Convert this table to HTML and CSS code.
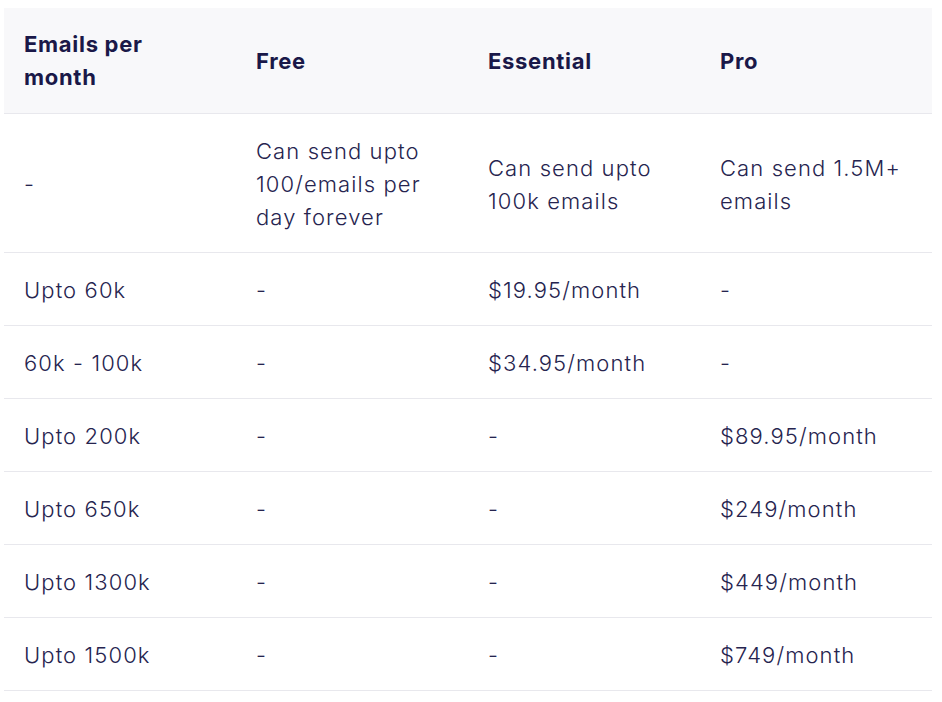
FILE: index.html
```html
<!DOCTYPE html>
<html>
<head>
<meta charset="utf-8">
<link rel="stylesheet" href="styles.css">
</head>
<body>
<table class="pricing">
  <colgroup>
    <col class="col"><col class="col"><col class="col"><col class="col">
  </colgroup>
  <thead>
    <tr>
      <th>Emails per month</th>
      <th>Free</th>
      <th>Essential</th>
      <th>Pro</th>
    </tr>
  </thead>
  <tbody>
    <tr><td>-</td><td>Can send upto 100/emails per day forever</td><td>Can send upto 100k emails</td><td>Can send 1.5M+ emails</td></tr>
    <tr><td>Upto 60k</td><td>-</td><td>$19.95/month</td><td>-</td></tr>
    <tr><td>60k - 100k</td><td>-</td><td>$34.95/month</td><td>-</td></tr>
    <tr><td>Upto 200k</td><td>-</td><td>-</td><td>$89.95/month</td></tr>
    <tr><td>Upto 650k</td><td>-</td><td>-</td><td>$249/month</td></tr>
    <tr><td>Upto 1300k</td><td>-</td><td>-</td><td>$449/month</td></tr>
    <tr><td>Upto 1500k</td><td>-</td><td>-</td><td>$749/month</td></tr>
  </tbody>
</table>
</body>
</html>
```
FILE: styles.css
```css
html, body {
  margin: 0;
  background: #ffffff;
}
body {
  padding: 8px 0 0 4px;
  font-family: Inter, "Noto Sans", sans-serif;
  color: #26244f;
}
.pricing {
  width: 928px;
  border-collapse: collapse;
  table-layout: fixed;
}
.pricing .col {
  width: 232px;
}
.pricing th,
.pricing td {
  box-sizing: border-box;
  padding: 20px 20px 19px 20px;
  text-align: left;
  vertical-align: middle;
  font-size: 22px;
  line-height: 33px;
}
.pricing th {
  font-weight: 700;
  color: #1a1848;
  background: #f8f8fa;
  letter-spacing: 0.7px;
}
.pricing td {
  font-weight: 300;
  letter-spacing: 1.1px;
  padding-top: 21px;
  padding-bottom: 18px;
  border-top: 1px solid #e8e8ed;
}
.pricing tbody tr:last-child td {
  border-bottom: 1px solid #e8e8ed;
}
```
